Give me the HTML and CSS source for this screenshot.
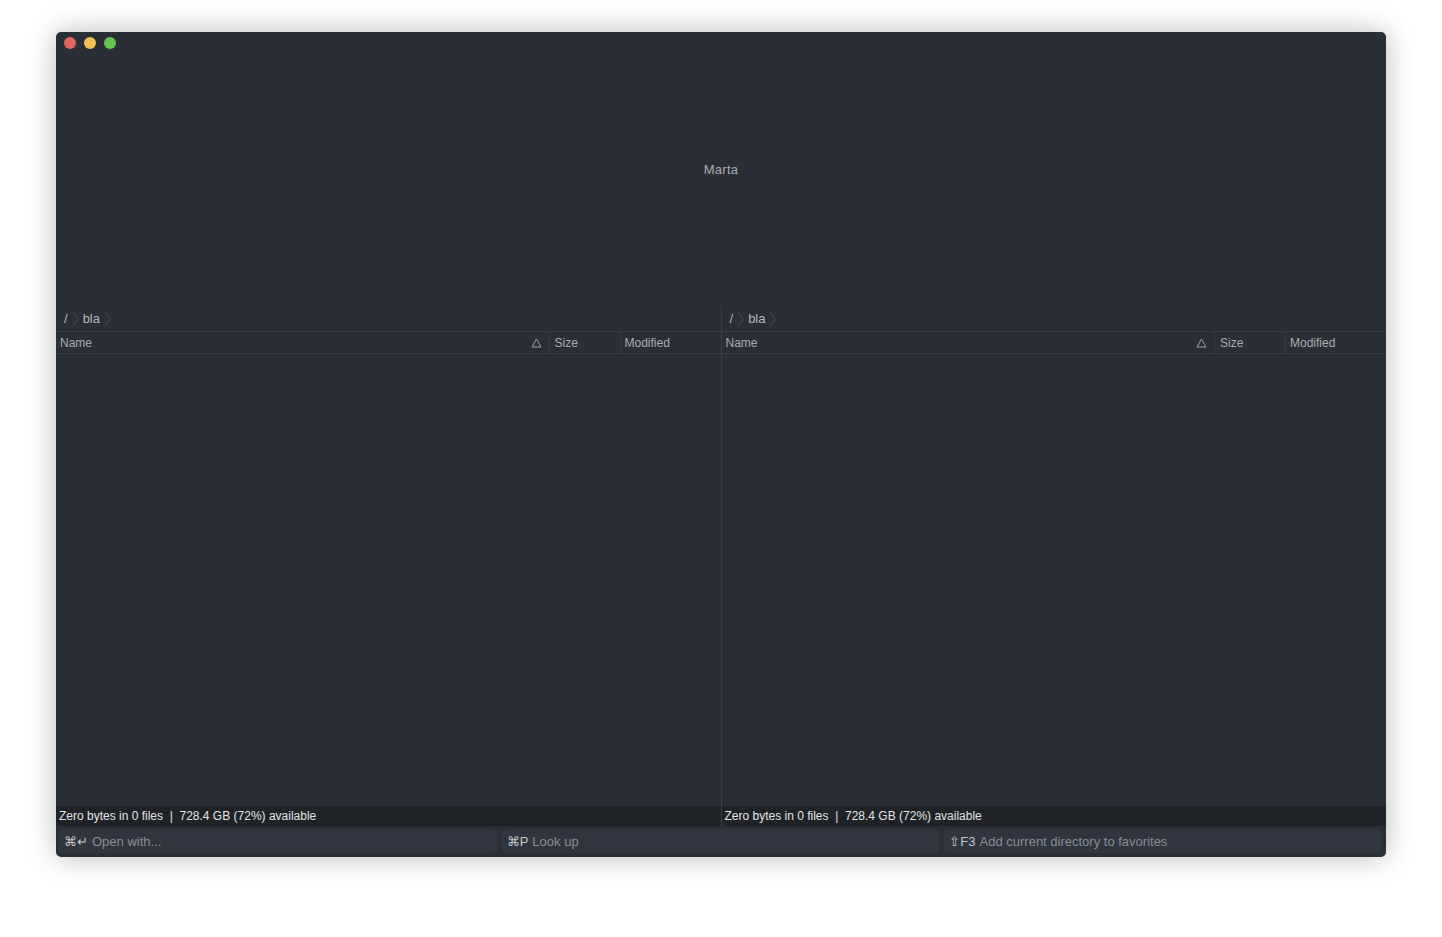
FILE: index.html
```html
<!DOCTYPE html>
<html lang="en">
<head>
    <meta charset="UTF-8">
    <meta name="viewport" content="width=device-width, initial-scale=1.0">
    <title>Marta</title>
    <link rel="stylesheet" href="styles.css">
</head>
<body>
    <div class="window">
        <div class="titlebar">
            <div class="lights">
                <span class="light red"></span>
                <span class="light yellow"></span>
                <span class="light green"></span>
            </div>
            <div class="title">Marta</div>
        </div>

        <div class="panes">
            <div class="pane">
                <div class="crumbs">
                    <span class="crumb">/</span>
                    <svg class="chev" width="7" height="16" viewBox="0 0 7 16"><path d="M1 1 L6 8 L1 15" fill="none" stroke="#444a54" stroke-width="1"/></svg>
                    <span class="crumb">bla</span>
                    <svg class="chev" width="7" height="16" viewBox="0 0 7 16"><path d="M1 1 L6 8 L1 15" fill="none" stroke="#444a54" stroke-width="1"/></svg>
                </div>
                <div class="header">
                    <div class="col col-name">
                        <span>Name</span>
                        <svg class="sort" width="11" height="10" viewBox="0 0 11 10"><path d="M5.5 1 L10 9 L1 9 Z" fill="none" stroke="#9a9ea5" stroke-width="1"/></svg>
                    </div>
                    <div class="col col-size">Size</div>
                    <div class="col col-mod">Modified</div>
                </div>
                <div class="list"></div>
                <div class="status">Zero bytes in 0 files &nbsp;|&nbsp; 728.4 GB (72%) available</div>
            </div>

            <div class="pane pane-right">
                <div class="crumbs">
                    <span class="crumb">/</span>
                    <svg class="chev" width="7" height="16" viewBox="0 0 7 16"><path d="M1 1 L6 8 L1 15" fill="none" stroke="#444a54" stroke-width="1"/></svg>
                    <span class="crumb">bla</span>
                    <svg class="chev" width="7" height="16" viewBox="0 0 7 16"><path d="M1 1 L6 8 L1 15" fill="none" stroke="#444a54" stroke-width="1"/></svg>
                </div>
                <div class="header">
                    <div class="col col-name">
                        <span>Name</span>
                        <svg class="sort" width="11" height="10" viewBox="0 0 11 10"><path d="M5.5 1 L10 9 L1 9 Z" fill="none" stroke="#9a9ea5" stroke-width="1"/></svg>
                    </div>
                    <div class="col col-size">Size</div>
                    <div class="col col-mod">Modified</div>
                </div>
                <div class="list"></div>
                <div class="status">Zero bytes in 0 files &nbsp;|&nbsp; 728.4 GB (72%) available</div>
            </div>
        </div>

        <div class="actions">
            <div class="action"><span class="key">⌘↵</span> Open with...</div>
            <div class="action"><span class="key">⌘P</span> Look up</div>
            <div class="action"><span class="key">⇧F3</span> Add current directory to favorites</div>
        </div>
    </div>
</body>
</html>
```

FILE: styles.css
```css
body {
    margin: 0;
    padding: 32px 56px;
    background: #fff;
    font-family: 'Liberation Sans', Arial, sans-serif;
}
.window {
    width: 1330px;
    height: 825px;
    background: #2a2e36;
    border-radius: 5px;
    overflow: hidden;
    display: flex;
    flex-direction: column;
    box-shadow: 0 0 28px rgba(0, 0, 0, 0.28);
}
.titlebar {
    position: relative;
    height: 274px;
    display: flex;
    align-items: center;
    justify-content: center;
}
.lights {
    position: absolute;
    top: 5px;
    left: 8px;
    display: flex;
    gap: 8px;
}
.light {
    width: 12px;
    height: 12px;
    border-radius: 50%;
}
.red { background: #e0675e; }
.yellow { background: #efc055; }
.green { background: #63c454; }
.title {
    color: #a9acb1;
    font-size: 13px;
    letter-spacing: 0.3px;
}
.panes {
    flex: 1;
    display: flex;
}
.pane {
    flex: 1;
    display: flex;
    flex-direction: column;
    min-width: 0;
}
.pane-right {
    border-left: 1px solid #393e47;
}
.crumbs {
    height: 25px;
    border-bottom: 1px solid #353a43;
    display: flex;
    align-items: center;
    gap: 2px;
    padding-left: 6px;
    color: #b4b7bc;
    font-size: 13px;
}
.crumb {
    padding: 0 2px;
}
.header {
    height: 21px;
    border-bottom: 1px solid #353a43;
    display: flex;
    color: #a9acb2;
    font-size: 12px;
}
.col {
    display: flex;
    align-items: center;
    padding-left: 4px;
}
.col-name {
    flex: 1;
    justify-content: space-between;
    padding-right: 7px;
}
.col-size {
    width: 65px;
    padding-left: 5px;
    border-left: 1px solid #353a43;
}
.col-mod {
    width: 96px;
    border-left: 1px solid #353a43;
}
.list {
    flex: 1;
}
.status {
    height: 20px;
    background: #1f2227;
    color: #e2e3e5;
    font-size: 12px;
    display: flex;
    align-items: center;
    padding-left: 3px;
    white-space: nowrap;
}
.actions {
    height: 31px;
    display: flex;
    gap: 5px;
    padding: 3px 4px 4px 3px;
    box-sizing: border-box;
}
.action {
    flex: 1;
    background: #30353f;
    border-radius: 4px;
    display: flex;
    align-items: center;
    padding-left: 5px;
    gap: 4px;
    color: #8a8e96;
    font-size: 13px;
    white-space: nowrap;
}
.key {
    color: #c4c6ca;
    font-size: 13px;
}
```
